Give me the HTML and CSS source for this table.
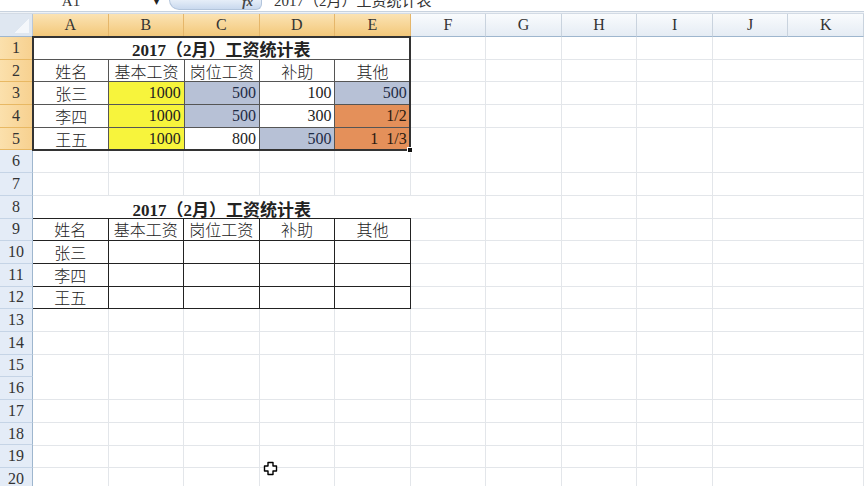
FILE: index.html
```html
<!DOCTYPE html>
<html>
<head>
<meta charset="utf-8">
<link rel="stylesheet" href="styles.css">
</head>
<body>
<div class="app">
  <div class="fbar">
    <div class="namebox"><span class="ftxt">A1</span></div>
    <span class="arrow">▾</span>
    <div class="pill"><span class="fx">fx</span></div>
    <span class="ftxt formula">2017（2月）工资统计表</span>
  </div>
  <div class="sep"></div>
  <div class="sheet">
    <div class="corner"></div>
    <div class="ch sel">A</div>
    <div class="ch sel">B</div>
    <div class="ch sel">C</div>
    <div class="ch sel">D</div>
    <div class="ch sel">E</div>
    <div class="ch">F</div>
    <div class="ch">G</div>
    <div class="ch">H</div>
    <div class="ch">I</div>
    <div class="ch">J</div>
    <div class="ch">K</div>

    <div class="rh sel r1">1</div>
    <div class="rh sel r2">2</div>
    <div class="rh sel r3">3</div>
    <div class="rh sel r4">4</div>
    <div class="rh sel r5">5</div>
    <div class="rh r6">6</div>
    <div class="rh r7">7</div>
    <div class="rh r8">8</div>
    <div class="rh r9">9</div>
    <div class="rh r10">10</div>
    <div class="rh r11">11</div>
    <div class="rh r12">12</div>
    <div class="rh r13">13</div>
    <div class="rh r14">14</div>
    <div class="rh r15">15</div>
    <div class="rh r16">16</div>
    <div class="rh r17">17</div>
    <div class="rh r18">18</div>
    <div class="rh r19">19</div>
    <div class="rh r20">20</div>

    <div class="canvas"></div>

    <div class="t1">
      <div class="c title">2017（2月）工资统计表</div>
      <div class="c">姓名</div><div class="c">基本工资</div><div class="c">岗位工资</div><div class="c">补助</div><div class="c">其他</div>
      <div class="c">张三</div><div class="c n yel">1000</div><div class="c n blu">500</div><div class="c n">100</div><div class="c n blu">500</div>
      <div class="c">李四</div><div class="c n yel">1000</div><div class="c n blu">500</div><div class="c n">300</div><div class="c n org">1/2</div>
      <div class="c">王五</div><div class="c n yel">1000</div><div class="c n">800</div><div class="c n blu">500</div><div class="c n org">1&nbsp;&nbsp;1/3</div>
    </div>
    <div class="selbox"><span class="handle"></span></div>

    <div class="t2title">2017（2月）工资统计表</div>
    <div class="t2">
      <div class="c">姓名</div><div class="c">基本工资</div><div class="c">岗位工资</div><div class="c">补助</div><div class="c">其他</div>
      <div class="c">张三</div><div class="c"></div><div class="c"></div><div class="c"></div><div class="c"></div>
      <div class="c">李四</div><div class="c"></div><div class="c"></div><div class="c"></div><div class="c"></div>
      <div class="c">王五</div><div class="c"></div><div class="c"></div><div class="c"></div><div class="c"></div>
    </div>

    <svg class="cursor" width="15" height="15" viewBox="0 0 15 15">
      <path d="M5 1.5 H10 V5 H13.5 V10 H10 V13.5 H5 V10 H1.5 V5 H5 Z" fill="#fff" stroke="#000" stroke-width="1.4" stroke-linejoin="round"/>
    </svg>
  </div>
</div>
</body>
</html>
```
FILE: styles.css
```css
* { box-sizing: border-box; }
html, body { margin: 0; padding: 0; background: #fff; }
body { width: 864px; height: 486px; overflow: hidden; font-family: "Liberation Serif", "Noto Sans CJK SC", serif; color: #222; }
.app { width: 864px; height: 486px; overflow: hidden; }

.fbar { height: 11px; overflow: hidden; display: flex; align-items: flex-start; background: #fff; }
.namebox { width: 150px; display: flex; justify-content: center; }
.ftxt { font-size: 15px; line-height: 15px; margin-top: -6px; color: #333; }
.namebox .ftxt { margin-left: -8px; }
.arrow { font-size: 10px; line-height: 10px; margin-top: -3px; margin-left: 4px; color: #222; }
.pill { width: 93px; height: 10px; margin-left: 10px; border-radius: 0 0 6px 10px; background: linear-gradient(#e6eef8, #c9d9ee); border: 1px solid #b3c5dc; border-top: none; display: flex; justify-content: flex-end; padding-right: 8px; }
.fx { font-family: "Liberation Serif", serif; font-style: italic; font-weight: bold; font-size: 13px; line-height: 13px; margin-top: -5px; color: #444; }
.formula { margin-left: 12px; font-family: "Liberation Serif", "Noto Sans CJK SC", serif; }

.sep { height: 3px; border-top: 1px solid #c8d2de; background: #eef2f7; border-bottom: 1px solid #d3dbe5; }

.sheet { position: relative; display: grid; grid-template-columns: 33px repeat(11, 1fr); grid-template-rows: 23px repeat(20, 22.7px); width: 864px; }

.corner { grid-column: 1; grid-row: 1; background: #dfe7f1; border-right: 1px solid #b9c7d7; border-bottom: 1px solid #9eb6ce; position: relative; }
.corner::after { content: ""; position: absolute; right: 3px; bottom: 3px; width: 14px; height: 14px; background: linear-gradient(to bottom right, transparent 50%, #f4f7fb 50%); }

.ch { grid-row: 1; display: flex; align-items: center; justify-content: center; font-size: 16px; color: #333; background: linear-gradient(#f9fbfd, #e5ecf4); border-right: 1px solid #c9d3de; border-bottom: 1px solid #9eb6ce; }
.ch.sel { background: linear-gradient(#fbe3b4, #f3c87a); border-right: 1px solid #e5b66a; border-bottom: 1px solid #c28a30; color: #333; }

.rh { grid-column: 1; display: flex; align-items: center; justify-content: center; font-size: 16px; color: #333; background: #e4ecf7; border-right: 1px solid #9eb6ce; border-bottom: 1px solid #c5d4e6; }
.rh.sel { background: linear-gradient(to right, #fbe0ac, #f7d190); border-bottom: 1px solid #e8b863; border-right: 1px solid #c28a30; }
.r1 { grid-row: 2; } .r2 { grid-row: 3; } .r3 { grid-row: 4; } .r4 { grid-row: 5; } .r5 { grid-row: 6; }
.r6 { grid-row: 7; } .r7 { grid-row: 8; } .r8 { grid-row: 9; } .r9 { grid-row: 10; } .r10 { grid-row: 11; }
.r11 { grid-row: 12; } .r12 { grid-row: 13; } .r13 { grid-row: 14; } .r14 { grid-row: 15; } .r15 { grid-row: 16; }
.r16 { grid-row: 17; } .r17 { grid-row: 18; } .r18 { grid-row: 19; } .r19 { grid-row: 20; } .r20 { grid-row: 21; }

.canvas { grid-column: 2 / -1; grid-row: 2 / -1;
  background-image:
    repeating-linear-gradient(to right, transparent 0 74.55px, #e3e6ea 74.55px 75.55px),
    repeating-linear-gradient(to bottom, transparent 0 21.7px, #e3e6ea 21.7px 22.7px); }

.c { display: flex; align-items: center; justify-content: center; font-size: 16px; font-weight: 300; border-right: 1px solid #555; border-bottom: 1px solid #555; white-space: nowrap; overflow: hidden; }
.c.n { justify-content: flex-end; padding-right: 3px; }
.yel { background: #f7f43c; }
.blu { background: #b7c1d6; color: #1e2b45; }
.org { background: #e4905a; color: #2a1a10; }

.t1 { grid-column: 2 / 7; grid-row: 2 / 7; display: grid; grid-template-columns: repeat(5, 1fr); grid-template-rows: repeat(5, 1fr); background: #fff; border-left: 1px solid #555; }
.t1 .title { grid-column: 1 / -1; font-size: 17px; font-weight: bold; border-right: 2px solid #111; border-top: 1px solid #222; }

.selbox { grid-column: 2 / 7; grid-row: 2 / 7; border: 2px solid #333; margin: -1px 0 -1px -1px; position: relative; pointer-events: none; }
.handle { position: absolute; right: -4px; bottom: -4px; width: 6px; height: 6px; background: #111; border: 1px solid #fff; }

.t2title { grid-column: 2 / 7; grid-row: 9; display: flex; align-items: center; justify-content: center; font-size: 17px; font-weight: bold; background: #fff; padding-top: 2px; }
.t2 { grid-column: 2 / 7; grid-row: 10 / 14; display: grid; grid-template-columns: repeat(5, 1fr); grid-template-rows: repeat(4, 1fr); background: #fff; border-top: 1px solid #222; margin-top: -1px; }
.t2 .c { border-color: #222; }

.cursor { position: absolute; left: 263px; top: 447px; }
```
